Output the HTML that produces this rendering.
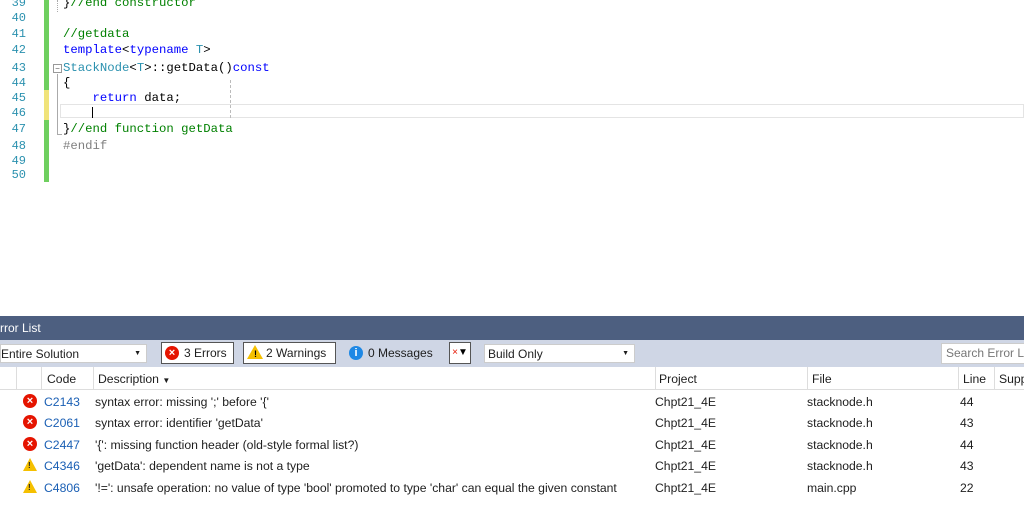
<!DOCTYPE html><html><head><style>
body{margin:0;width:1024px;height:509px;background:#fff;overflow:hidden;position:relative;font-family:"Liberation Sans",sans-serif}
.ln{position:absolute;left:8px;width:18px;text-align:right;font:12px "Liberation Mono",monospace;color:#2b91af}
.cd{position:absolute;left:63px;font:12.3px "Liberation Mono",monospace;color:#000;white-space:pre}
.g{color:#008000}.b{color:#0000ff}.t{color:#2b91af}.p{color:#808080}
.a{position:absolute;white-space:nowrap}
.tb{font-size:12px;color:#1e1e1e}
.row{position:absolute;left:0;width:1024px;height:21px;font-size:12.2px;color:#1e1e1e}
.row span{position:absolute;top:4px;white-space:nowrap}
.ic{position:absolute;left:23px;top:3px;width:14px;height:14px}
</style></head><body>
<div class="a" style="left:44px;top:0;width:5px;height:182px;background:#6fcf5f"></div>
<div class="a" style="left:44px;top:90px;width:5px;height:30px;background:#f0e37a"></div>
<div class="a" style="left:60px;top:104px;width:964px;height:14px;border:1px solid #e4e4e4;box-sizing:border-box"></div>
<div class="a" style="left:92px;top:107px;width:1px;height:11px;background:#000"></div>
<div class="a" style="left:57px;top:0;width:1px;height:12px;border-left:1px dotted #aaa"></div>
<div class="a" style="left:57px;top:74px;width:1px;height:60px;border-left:1px solid #aaa"></div>
<div class="a" style="left:57px;top:134px;width:5px;height:1px;background:#aaa"></div>
<div class="a" style="left:53px;top:64px;width:7px;height:7px;border:1px solid #999;background:#fff;font-size:8px;line-height:7px;text-align:center;color:#555">−</div>
<div class="a" style="left:230px;top:80px;width:1px;height:38px;border-left:1px dashed #bbb"></div>
<div class="ln" style="top:-4px">39</div><div class="cd" style="top:-4px">}<span class="g">//end constructor</span></div>
<div class="ln" style="top:11px">40</div>
<div class="ln" style="top:27px">41</div><div class="cd g" style="top:27px">//getdata</div>
<div class="ln" style="top:43px">42</div><div class="cd" style="top:43px"><span class="b">template</span>&lt;<span class="b">typename</span> <span class="t">T</span>&gt;</div>
<div class="ln" style="top:61px">43</div><div class="cd" style="top:61px"><span class="t">StackNode</span>&lt;<span class="t">T</span>&gt;::getData()<span class="b">const</span></div>
<div class="ln" style="top:76px">44</div><div class="cd" style="top:76px">{</div>
<div class="ln" style="top:91px">45</div><div class="cd" style="top:91px">    <span class="b">return</span> data;</div>
<div class="ln" style="top:106px">46</div>
<div class="ln" style="top:122px">47</div><div class="cd" style="top:122px">}<span class="g">//end function getData</span></div>
<div class="ln" style="top:139px">48</div><div class="cd p" style="top:139px">#endif</div>
<div class="ln" style="top:154px">49</div>
<div class="ln" style="top:168px">50</div>

<div class="a" style="left:0;top:316px;width:1024px;height:24px;background:#4d5f80;color:#fff;font-size:12px;line-height:24px">rror List</div>
<div class="a" style="left:0;top:340px;width:1024px;height:27px;background:#cfd6e5"></div>
<div class="a tb" style="left:0;top:344px;width:147px;height:19px;background:#fff;border:1px solid #ccc;box-sizing:border-box;line-height:18px">Entire Solution<span style="position:absolute;right:5px;font-size:7px">▼</span></div>
<div class="a tb" style="left:161px;top:342px;width:73px;height:22px;background:#fff;border:1px solid #555;box-sizing:border-box;line-height:20px;padding-left:22px">3 Errors</div>
<div class="a" style="left:165px;top:346px;width:14px;height:14px;border-radius:50%;background:#e51400;color:#fff;font-size:11px;line-height:14px;text-align:center;font-weight:bold">×</div>
<div class="a tb" style="left:243px;top:342px;width:93px;height:22px;background:#fff;border:1px solid #555;box-sizing:border-box;line-height:20px;padding-left:22px">2 Warnings</div>
<div class="a" style="left:247px;top:345px;width:0;height:0;border-left:8px solid transparent;border-right:8px solid transparent;border-bottom:14px solid #f5c000"></div>
<div class="a" style="left:254px;top:349px;font-size:9px;font-weight:bold;color:#000">!</div>
<div class="a" style="left:349px;top:346px;width:14px;height:14px;border-radius:50%;background:#1e88e5;color:#fff;font-size:11px;line-height:14px;text-align:center;font-weight:bold">i</div>
<div class="a tb" style="left:368px;top:346px;font-size:12px">0 Messages</div>
<div class="a" style="left:449px;top:342px;width:22px;height:22px;background:#fff;border:1px solid #555;box-sizing:border-box;font-size:10px;text-align:center;line-height:20px"><span style="color:#e51400">×</span>▼</div>
<div class="a tb" style="left:484px;top:344px;width:151px;height:19px;background:#fff;border:1px solid #ccc;box-sizing:border-box;line-height:18px;padding-left:3px">Build Only<span style="position:absolute;right:5px;font-size:7px">▼</span></div>
<div class="a tb" style="left:941px;top:343px;width:90px;height:21px;background:#fff;border:1px solid #ccc;box-sizing:border-box;line-height:19px;padding-left:4px;color:#777;overflow:hidden">Search Error List</div>
<div class="a" style="left:0;top:367px;width:1024px;height:23px;border-bottom:1px solid #ddd;box-sizing:border-box;font-size:12.2px;color:#1e1e1e">
<span class="a" style="left:47px;top:5px">Code</span><span class="a" style="left:98px;top:5px">Description <span style="font-size:8px">▼</span></span>
<span class="a" style="left:659px;top:5px">Project</span><span class="a" style="left:812px;top:5px">File</span><span class="a" style="left:963px;top:5px">Line</span><span class="a" style="left:999px;top:5px">Supp</span>
<div class="a" style="left:16px;top:0;width:1px;height:22px;background:#ddd"></div><div class="a" style="left:41px;top:0;width:1px;height:22px;background:#ddd"></div><div class="a" style="left:93px;top:0;width:1px;height:22px;background:#ddd"></div><div class="a" style="left:655px;top:0;width:1px;height:22px;background:#ddd"></div><div class="a" style="left:807px;top:0;width:1px;height:22px;background:#ddd"></div><div class="a" style="left:958px;top:0;width:1px;height:22px;background:#ddd"></div><div class="a" style="left:994px;top:0;width:1px;height:22px;background:#ddd"></div></div>

<div class="row" style="top:391px"><div class="ic" style="border-radius:50%;background:#e51400;color:#fff;font-size:11px;line-height:14px;text-align:center;font-weight:bold">×</div><span style="left:44px;color:#1a5fb4">C2143</span><span style="left:95px">syntax error: missing ';' before '{'</span><span style="left:655px">Chpt21_4E</span><span style="left:807px">stacknode.h</span><span style="left:960px">44</span></div>
<div class="row" style="top:412px"><div class="ic" style="border-radius:50%;background:#e51400;color:#fff;font-size:11px;line-height:14px;text-align:center;font-weight:bold">×</div><span style="left:44px;color:#1a5fb4">C2061</span><span style="left:95px">syntax error: identifier 'getData'</span><span style="left:655px">Chpt21_4E</span><span style="left:807px">stacknode.h</span><span style="left:960px">43</span></div>
<div class="row" style="top:434px"><div class="ic" style="border-radius:50%;background:#e51400;color:#fff;font-size:11px;line-height:14px;text-align:center;font-weight:bold">×</div><span style="left:44px;color:#1a5fb4">C2447</span><span style="left:95px">'{': missing function header (old-style formal list?)</span><span style="left:655px">Chpt21_4E</span><span style="left:807px">stacknode.h</span><span style="left:960px">44</span></div>
<div class="row" style="top:455px"><div class="ic" style="width:0;height:0;border-left:7px solid transparent;border-right:7px solid transparent;border-bottom:13px solid #f5c000"></div><span style="left:28px;top:6px;font-size:8px;font-weight:bold">!</span><span style="left:44px;color:#1a5fb4">C4346</span><span style="left:95px">'getData': dependent name is not a type</span><span style="left:655px">Chpt21_4E</span><span style="left:807px">stacknode.h</span><span style="left:960px">43</span></div>
<div class="row" style="top:477px"><div class="ic" style="width:0;height:0;border-left:7px solid transparent;border-right:7px solid transparent;border-bottom:13px solid #f5c000"></div><span style="left:28px;top:6px;font-size:8px;font-weight:bold">!</span><span style="left:44px;color:#1a5fb4">C4806</span><span style="left:95px">'!=': unsafe operation: no value of type 'bool' promoted to type 'char' can equal the given constant</span><span style="left:655px">Chpt21_4E</span><span style="left:807px">main.cpp</span><span style="left:960px">22</span></div>
</body></html>
